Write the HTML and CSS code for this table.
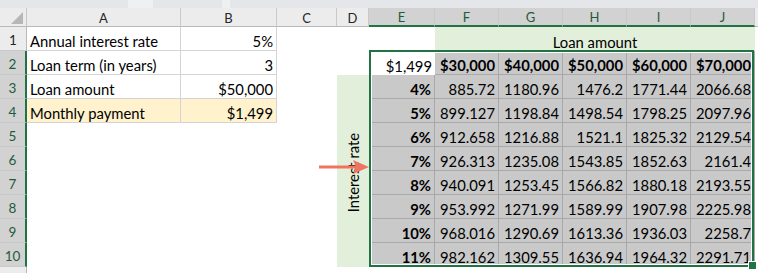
FILE: index.html
```html
<!DOCTYPE html>
<html lang="en">
<head>
<meta charset="utf-8">
<title>Loan data table</title>
<link rel="stylesheet" href="styles.css">
</head>
<body>
<div class="topbar"><span class="seg s1"></span><span class="seg lt w25"></span><span class="seg s2"></span><span class="seg lt w8"></span><span class="seg s3"></span></div>
<div class="sheet">
  <div class="corner"><span class="tri"></span></div>
  <div class="ch">A</div><div class="ch">B</div><div class="ch">C</div><div class="ch">D</div>
  <div class="ch sel">E</div><div class="ch sel">F</div><div class="ch sel">G</div><div class="ch sel">H</div><div class="ch sel">I</div><div class="ch sel">J</div>
  <div class="ch rest"></div>

  <div class="rh">1</div>
  <div class="c bd">Annual interest rate</div><div class="c bd num">5%</div>
  <div></div><div></div><div></div>
  <div class="loan">Loan amount</div>
  <div></div>

  <div class="rh sel">2</div>
  <div class="c bd">Loan term (in years)</div><div class="c bd num">3</div>
  <div></div><div></div>
  <div class="c num e2">$1,499</div>
  <div class="c num g b">$30,000</div><div class="c num g b">$40,000</div><div class="c num g b">$50,000</div><div class="c num g b">$60,000</div><div class="c num g b">$70,000</div>
  <div></div>

  <div class="rh sel">3</div>
  <div class="c bd">Loan amount</div><div class="c bd num">$50,000</div>
  <div></div>
  <div class="rate"><span>Interest rate</span></div>
  <div class="c num g b">4%</div>
  <div class="c num g">885.72</div><div class="c num g">1180.96</div><div class="c num g">1476.2</div><div class="c num g">1771.44</div><div class="c num g">2066.68</div>
  <div></div>

  <div class="rh sel">4</div>
  <div class="c bd yl">Monthly payment</div><div class="c bd yl num">$1,499</div>
  <div></div>
  <div class="c num g b">5%</div>
  <div class="c num g">899.127</div><div class="c num g">1198.84</div><div class="c num g">1498.54</div><div class="c num g">1798.25</div><div class="c num g">2097.96</div>
  <div></div>

  <div class="rh sel">5</div><div></div><div></div><div></div>
  <div class="c num g b">6%</div>
  <div class="c num g">912.658</div><div class="c num g">1216.88</div><div class="c num g">1521.1</div><div class="c num g">1825.32</div><div class="c num g">2129.54</div>
  <div></div>

  <div class="rh sel">6</div><div></div><div></div><div></div>
  <div class="c num g b">7%</div>
  <div class="c num g">926.313</div><div class="c num g">1235.08</div><div class="c num g">1543.85</div><div class="c num g">1852.63</div><div class="c num g">2161.4</div>
  <div></div>

  <div class="rh sel">7</div><div></div><div></div><div></div>
  <div class="c num g b">8%</div>
  <div class="c num g">940.091</div><div class="c num g">1253.45</div><div class="c num g">1566.82</div><div class="c num g">1880.18</div><div class="c num g">2193.55</div>
  <div></div>

  <div class="rh sel">8</div><div></div><div></div><div></div>
  <div class="c num g b">9%</div>
  <div class="c num g">953.992</div><div class="c num g">1271.99</div><div class="c num g">1589.99</div><div class="c num g">1907.98</div><div class="c num g">2225.98</div>
  <div></div>

  <div class="rh sel">9</div><div></div><div></div><div></div>
  <div class="c num g b">10%</div>
  <div class="c num g">968.016</div><div class="c num g">1290.69</div><div class="c num g">1613.36</div><div class="c num g">1936.03</div><div class="c num g">2258.7</div>
  <div></div>

  <div class="rh sel">10</div><div></div><div></div><div></div>
  <div class="c num g b">11%</div>
  <div class="c num g">982.162</div><div class="c num g">1309.55</div><div class="c num g">1636.94</div><div class="c num g">1964.32</div><div class="c num g">2291.71</div>
  <div></div>

  <div class="rh rest"></div>

  <div class="selection"></div>
</div>
<svg class="arrow" width="52" height="16" viewBox="0 0 52 16" aria-hidden="true">
  <line x1="0" y1="7" x2="40" y2="7" stroke="#f07462" stroke-width="3"/>
  <polygon points="50,7 34,0 37,7 34,14" fill="#f07462"/>
</svg>
</body>
</html>
```

FILE: styles.css
```css
* { box-sizing: border-box; }

body {
  margin: 0;
  width: 758px;
  height: 273px;
  overflow: hidden;
  position: relative;
  background: #fff;
  font-family: Lato, "Liberation Sans", sans-serif;
  color: #000;
}

.topbar {
  height: 8px;
  display: flex;
  background: #e4e6e9;
}
.seg { display: block; height: 100%; }
.s1 { width: 128px; background: #e4e6e9; }
.s2 { width: 69px; background: #e4e6e9; }
.s3 { flex: 1; background: #e4e6e9; }
.lt { background: #eff0f2; }
.w25 { width: 25px; }
.w8 { width: 8px; }

.sheet {
  display: grid;
  grid-template-columns: 27px 154px 96px 60px 32px 66px repeat(5, 64px) 1fr;
  grid-template-rows: 19px repeat(10, 24px) 1fr;
  height: 265px;
  position: relative;
  font-size: 14.8px;
}

.corner {
  background: #ececec;
  border-right: 1px solid #c6c6c6;
  border-bottom: 1px solid #b9b9b9;
  display: flex;
  align-items: flex-end;
  justify-content: flex-end;
  padding: 0 3px 2px 0;
}
.tri {
  width: 12px;
  height: 12px;
  background: #b7b7b7;
  clip-path: polygon(100% 0, 100% 100%, 0 100%);
}

.ch {
  background: #ececec;
  border-right: 1px solid #c9c9c9;
  border-bottom: 1px solid #b9b9b9;
  display: flex;
  align-items: center;
  justify-content: center;
  padding-top: 1px;
  font-size: 13px;
  color: #262626;
}
.ch.sel {
  background: #d2d2d2;
  border-bottom: 2px solid #217346;
  color: #1f5a3a;
}
.ch.rest { border-right: none; }

.rh {
  background: #ececec;
  border-right: 1px solid #b9b9b9;
  border-bottom: 1px solid #c9c9c9;
  display: flex;
  align-items: flex-end;
  justify-content: center;
  padding-bottom: 2px;
  font-size: 13.5px;
  line-height: 16px;
  color: #262626;
}
.rh.sel {
  background: #d2d2d2;
  border-right: 2px solid #217346;
  color: #1f5a3a;
}
.rh.rest { border-bottom: none; }

.c {
  display: flex;
  align-items: flex-end;
  padding: 0 3px 0 3px;
  line-height: 18px;
  white-space: nowrap;
}
.num { justify-content: flex-end; }
.bd {
  border-right: 1px solid #d4d4d4;
  border-bottom: 1px solid #d4d4d4;
}
.yl { background: #fff2cc; }
.e2 { background: #fff; }
.g {
  background: #c9c9c9;
  border-right: 1px solid #a9a9a9;
  border-bottom: 1px solid #a9a9a9;
}
.b { font-weight: 700; }

.loan {
  grid-column: span 5;
  background: #e2efda;
  display: flex;
  align-items: flex-end;
  justify-content: center;
  padding-bottom: 0;
  line-height: 18px;
}

.rate {
  grid-row: span 8;
  background: #e2efda;
  display: flex;
  align-items: center;
  justify-content: center;
  padding-top: 3px;
}
.rate span {
  writing-mode: vertical-rl;
  transform: rotate(180deg);
  white-space: nowrap;
}

.selection {
  position: absolute;
  grid-column: 6 / 12;
  grid-row: 3 / 12;
  top: -1px;
  left: 0;
  right: 1px;
  bottom: 0;
  border: 2px solid #217346;
  box-shadow: inset 0 0 0 1px #fff;
}
.selection::after {
  content: "";
  position: absolute;
  right: -5px;
  bottom: -5px;
  width: 7px;
  height: 7px;
  background: #217346;
  border: 1px solid #fff;
}

.arrow {
  position: absolute;
  left: 319px;
  top: 160px;
}
```
